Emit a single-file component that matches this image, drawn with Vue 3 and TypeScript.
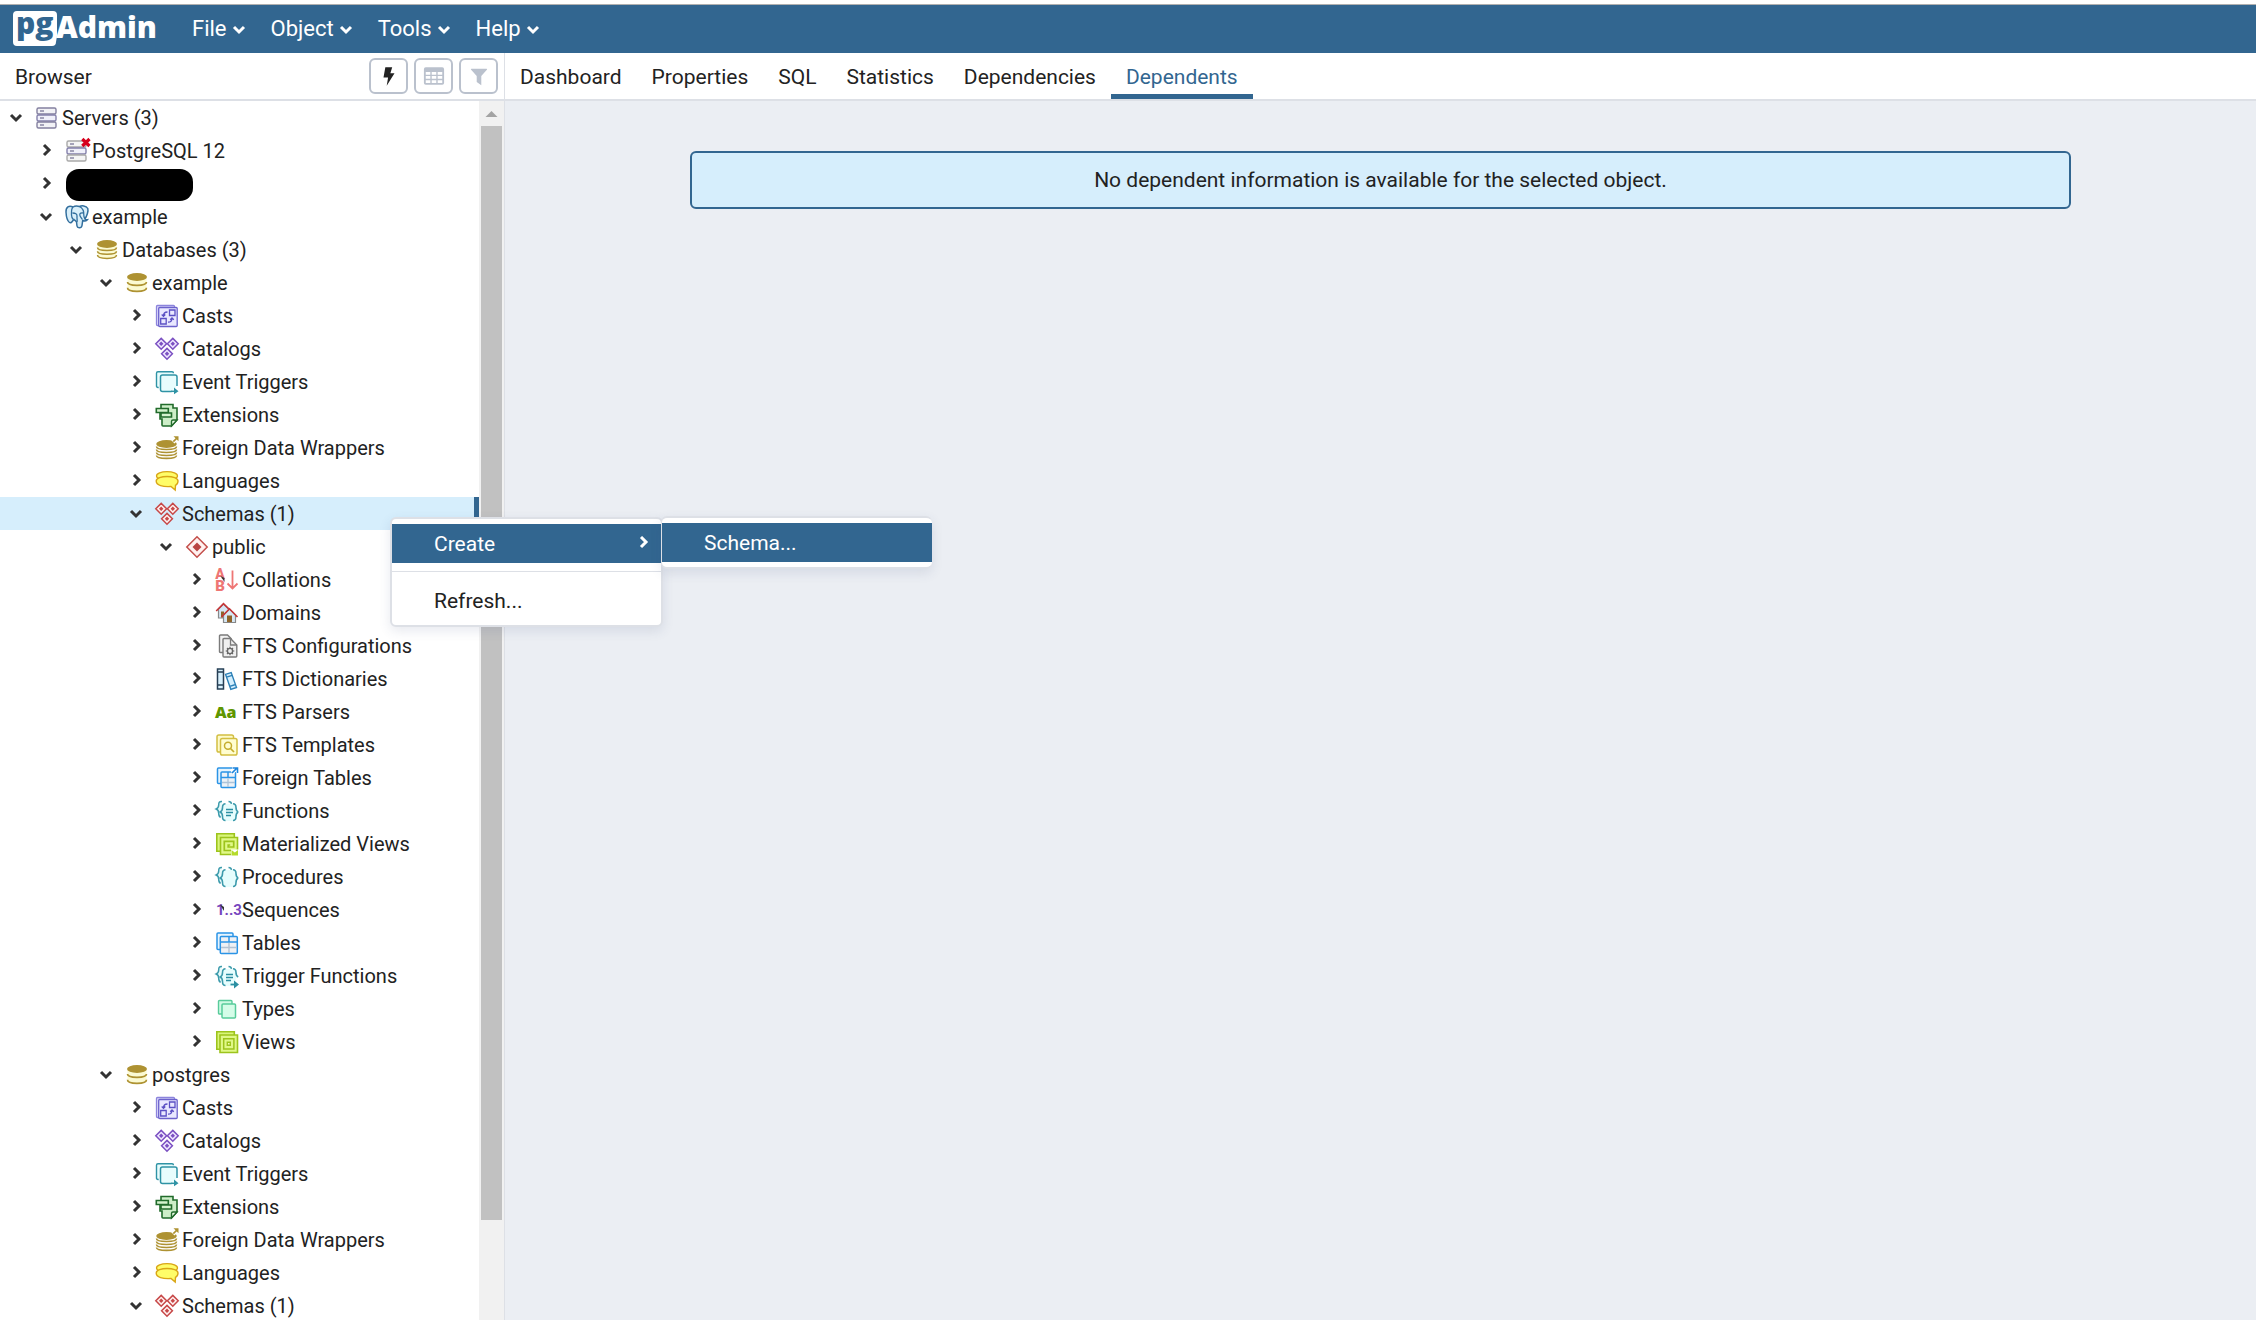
<script setup lang="ts">
import { ref } from 'vue'

type IconName = keyof typeof icons

interface TreeRow {
  level: number
  label: string
  icon: IconName
  open?: boolean
  selected?: boolean
  redacted?: boolean
}

const servers = (outer: string, outerFill: string) => `
  <rect x="2" y="2" width="19" height="6" rx="1.5" fill="${outerFill}" stroke="${outer}" stroke-width="1.4"/>
  <rect x="2" y="9" width="19" height="6" rx="1.5" fill="#f0f0fa" stroke="#8480ab" stroke-width="1.4"/>
  <rect x="2" y="16" width="19" height="6" rx="1.5" fill="${outerFill}" stroke="${outer}" stroke-width="1.4"/>
  <path d="M5 5h4M5 12h4M5 19h4" stroke="#8a88a5" stroke-width="1.4"/>`

const diamonds = (line: string, fill: string) =>
  [[6.2, 6.8], [17.8, 6.8], [12, 16.8]]
    .map(([x, y]) => `<g transform="translate(${x} ${y})">
      <path d="M0-5.400L5.400 0 0 5.400-5.400 0z" fill="${fill}" stroke="${line}" stroke-width="1.5"/>
      <path d="M0-2.200L2.200 0 0 2.200-2.200 0z" fill="${line}"/></g>`)
    .join('')

const braces = (inner: string) => `
  <path d="M7 2.5c-3 0-3.400 1-3.400 3.500 0 2.500-.2 3-2.400 4 2.200 1 2.400 2 2.400 4.500 0 2 .4 3 1.900 3.500z" fill="#e6fbfb"/>
  <path d="M9 5h10l3 7-3 10H9l-2-9z" fill="#e6fdfd"/>
  <path d="M7 2.500C4.200 2.300 3.700 3.300 3.700 6c0 2.200-.2 3-2.500 4 2.300 1 2.500 2 2.500 4.200 0 2.500.3 3.500 2 4M13.500 2.500c2.200 0 2.800.6 3 2.300" fill="none" stroke="#3c9bac" stroke-width="1.5"/>
  <path d="M10.500 4.700C8 4.700 7.500 6 7.500 8.500c0 2.500-.3 3.500-2.200 4.500 1.900 1 2.200 2 2.200 4.500 0 2.800.5 4 3 4" fill="none" stroke="#3c9bac" stroke-width="1.6"/>
  <path d="M18 4.700c2.500 0 3 1.300 3 3.800 0 2.500.3 3.500 2.200 4.500" fill="none" stroke="#3c9bac" stroke-width="1.6"/>
  ${inner}`

const braceTail = '<path d="M23.200 13c-1.900 1-2.200 2-2.200 4.500 0 2.800-.5 4-3 4" fill="none" stroke="#3c9bac" stroke-width="1.6"/>'
const braceLines = '<path d="M11 10.500h7M11 13.500h7M11 16.500h5" stroke="#2b8fa2" stroke-width="1.400"/>'

const icons = {
  servers: servers('#8480a0', '#f2f2f6'),
  serverBad: servers('#a9a9a9', '#f5f5f5') +
    '<path d="M17.300 0l7.200 7M24.500 0l-7.200 7" stroke="#d6001c" stroke-width="3.200"/>',
  none: '',
  elephant: `
    <path d="M8 2C4 0 .8 2 1 7c.2 4 1.500 9 3.500 10.500C6 18.500 7 17 8 15.500l1-1c1 1 2 1.500 2.500 2.500l.5 4c.3 2.500 4.500 2.500 5-.5l.7-5c2 .8 4 .4 4.800-.8-1.500.2-2.500-.2-2.500-1C22 11 23.500 6 22.800 3.500 21 .3 16.500.5 14.500 1.500 12 .6 9.500 1 8 2z" fill="#d9effa" stroke="#336f9e" stroke-width="1.500"/>
    <path d="M8 2C6 4 6.500 8 6.500 10c0 2 .5 3.500 2 4.800M14.500 1.500c3 1.500 4.500 5 4.300 8.500-.1 2 .7 3 1.200 3.800M12 17c.5-2-.2-3 0-6 .2-2-1.500-3-4.500-3M18.500 8c-2-.5-4 0-3.700 2 .3 2 1.500 2.500 2.500 4.500" fill="none" stroke="#336f9e" stroke-width="1.300"/>`,
  databases: `
    <path d="M2.500 7v10.500c0 4.500 19 4.500 19 0V7z" fill="#fbfad2"/>
    <path d="M2.500 9.500c0 4 19 4 19 0M2.500 13.300c0 4 19 4 19 0M2.500 17c0 4.500 19 4.500 19 0" fill="none" stroke="#ae9232" stroke-width="1.500"/>
    <ellipse cx="12" cy="6" rx="10" ry="3.900" fill="#ae9232"/>`,
  database: `
    <path d="M2.500 7v10c0 4.800 19 4.800 19 0V7z" fill="#fbfad2"/>
    <path d="M2.500 11c0 4.400 19 4.400 19 0M2.500 16.800c0 4.800 19 4.800 19 0" fill="none" stroke="#ae9232" stroke-width="1.700"/>
    <ellipse cx="12" cy="6" rx="10" ry="3.900" fill="#ae9232"/>`,
  casts: `
    <rect x="1.500" y="1.500" width="18" height="20" rx="1" fill="#dedcfb" stroke="#8c84dc" stroke-width="1.300"/>
    <rect x="3.700" y="3.500" width="18.500" height="19" rx="1" fill="#e9e8ff" stroke="#6c62cc" stroke-width="1.300"/>
    <path d="M14.500 6h5.500v5.500h-5.500zM5.700 14.500h5.500V20H5.700zM12.500 8c-3 0-4 1-4 4M6.700 10.500l1.800 1.800 1.800-1.800M13 18.200c3 0 4-1 4-4M15.200 15.700l1.800-1.800 1.800 1.800" fill="none" stroke="#5b50c4" stroke-width="1.300"/>`,
  catalogs: diamonds('#7b50c2', '#eee6ff'),
  schemas: diamonds('#c74848', '#fff0ef'),
  eventTriggers: `
    <path d="M3.700 17.500H3q-1.500 0-1.500-1.500V3.200q0-1.500 1.500-1.500h14q1.500 0 1.500 1.500" fill="#e8fdfd" stroke="#2f93a5" stroke-width="1.400"/>
    <path d="M16.500 21.500H7.500q-2 0-2-2V7q0-2 2-2H20q2 0 2 2v9" fill="#e8fdfd" stroke="#2f93a5" stroke-width="1.500"/>
    <path d="M16 21.300h4" stroke="#2f93a5" stroke-width="1.500"/><path d="M19 17.500l4.500 3.800-4.500 3z" fill="#2f93a5"/>`,
  extensions: `
    <path d="M6 5V1.500h12V5h4v12l-5.500 6H8q-1 0-1-1v-6H5v-6" fill="#cdeec8" stroke="#216b2b" stroke-width="1.600"/>
    <path d="M1.300 5.500h12v4h-12zM6 10h10.500v4H6z" fill="#d5f3cf" stroke="#216b2b" stroke-width="1.600"/>
    <path d="M22 17h-4q-1.500 0-1.500 1.500V23z" fill="#e9f9e5" stroke="#216b2b" stroke-width="1.400"/>`,
  fdw: `
    <path d="M1.500 10.500c0 4 20 4 20 0M1.500 13.500c0 4 20 4 20 0M1.500 16.500c0 4 20 4 20 0M1.500 19.500c0 3.800 20 3.800 20 0" fill="none" stroke="#ae9232" stroke-width="1.600"/>
    <ellipse cx="11.500" cy="8" rx="10.300" ry="3.900" fill="#ae9232"/>
    <path d="M18 6l3.500-3.500" stroke="#fff" stroke-width="4"/>
    <path d="M18.300 5.700L22 2" stroke="#ae9232" stroke-width="1.700"/><path d="M18.500.3h5v5z" fill="#ae9232"/>`,
  languages: `
    <ellipse cx="12" cy="7" rx="10.500" ry="4.300" fill="#fffd68" stroke="#d9a616" stroke-width="1.300"/>
    <path d="M1.200 12c0-6 21.800-6 21.800 0 0 2-1 3.500-2.500 4.300l-.3 4.700-4.200-3.500C8 18 1.200 16.500 1.200 12z" fill="#fffd68" stroke="#d9a616" stroke-width="1.400"/>`,
  schema: `
    <path d="M12 1.800l10.200 10.200L12 22.200 1.800 12z" fill="#fff1ef" stroke="#c44f4b" stroke-width="1.500"/>
    <path d="M12 7.500l4.500 4.500-4.500 4.500L7.500 12z" fill="#b94442"/>`,
  collations: `
    <text x="5" y="10.500" text-anchor="middle" font-family="Roboto, sans-serif" font-weight="900" font-size="14" fill="#ee7674">A</text>
    <text x="5" y="23" text-anchor="middle" font-family="Roboto, sans-serif" font-weight="900" font-size="15" fill="#ee7674">B</text>
    <path d="M17.500 2.500v18M12.500 15.500l5 5 5-5" fill="none" stroke="#ee7674" stroke-width="1.800"/>
    <path d="M5.500 8l4 2v4z" fill="#333"/>`,
  domains: `
    <path d="M3.500 8l5-5 5 5v9h-10z" fill="#d5e7f5" stroke="#888" stroke-width="1.200"/><path d="M6 10.500h3v6H6z" fill="#8f642a"/>
    <path d="M1.200 10L8.500 2.700 14 8" fill="none" stroke="#c63638" stroke-width="1.600"/>
    <path d="M8.500 14l6-6 6 6v7.500h-12z" fill="#d5e7f5" stroke="#888" stroke-width="1.200"/><path d="M12 14.500h5v6.500h-5z" fill="#8f642a"/>
    <path d="M6.500 16l8-8.200 8 8.200" fill="none" stroke="#c63638" stroke-width="1.600"/>`,
  ftsConfig: `
    <path d="M8 18.500H5.500q-1 0-1-1V2q0-1 1-1h7l4 4" fill="#f2f2f2" stroke="#7b7b7b" stroke-width="1.400"/>
    <path d="M9 4.500h6.500l6.300 6.500v11q0 1-1 1H9q-1 0-1-1V5.500q0-1 1-1z" fill="#efefef" stroke="#7b7b7b" stroke-width="1.400"/>
    <path d="M15.500 4.500V11h6.300" fill="none" stroke="#7b7b7b" stroke-width="1.300"/>
    <circle cx="15" cy="17" r="2.600" fill="none" stroke="#666" stroke-width="1.400"/>
    <path d="M15 12.700v1.500M15 19.800v1.500M10.700 17h1.500M17.800 17h1.500M12 14l1 1M17 19l1 1M18 14l-1 1M13 19l-1 1" stroke="#666" stroke-width="1.200"/>`,
  ftsDict: `
    <path d="M2.500 2h6v20h-6zM2.500 5h6M2.500 18h6" fill="#d9f1fd" stroke="#263f55" stroke-width="1.500"/>
    <path d="M10.500 7.300l5.700-1.800 5.300 15-5.700 1.800zM11.500 10.200l5.700-1.800M14.800 19.300l5.700-1.800" fill="#d5effd" stroke="#2c80b7" stroke-width="1.400"/>`,
  ftsParser: '<text x="0" y="18" font-family="Open Sans, sans-serif" font-weight="800" font-size="16" fill="#5f9600">Aa</text>',
  ftsTemplate: `
    <rect x="2" y="2" width="16.500" height="17" rx="1.800" fill="#fdfac9" stroke="#d2be42" stroke-width="1.500"/>
    <rect x="5.500" y="5.500" width="16.500" height="16.500" rx="1.800" fill="#fffdd0" stroke="#d2be42" stroke-width="1.500"/>
    <circle cx="13" cy="12.800" r="3.500" fill="none" stroke="#c5ad2e" stroke-width="1.500"/><path d="M15.500 15.500l3.500 3.500" stroke="#c5ad2e" stroke-width="1.700"/>`,
  foreignTable: `
    <path d="M6 17.500H3.500q-1 0-1-1V3q0-1 1-1H17" fill="#e6f4fe" stroke="#2b94e6" stroke-width="1.500"/>
    <rect x="6" y="6" width="14.500" height="15.500" rx="1" fill="#edf2f7" stroke="#2b94e6" stroke-width="1.500"/>
    <path d="M6 11.500h14.500M13 6v6" stroke="#2b94e6" stroke-width="1.500"/><path d="M7 16.500h13M13 12.500v8.500" stroke="#adc3d8" stroke-width="1.300"/>
    <path d="M17 7l5-5" stroke="#fff" stroke-width="3.500"/><path d="M17 7l5-5M17.500 2H22.500v5" fill="none" stroke="#1c84dc" stroke-width="1.600"/>`,
  functions: braces(braceTail + braceLines),
  procedures: braces(braceTail),
  triggerFunctions: braces(braceLines + '<path d="M15.500 20.500h4" stroke="#2b8fa2" stroke-width="1.800"/><path d="M19 16.500l5 4-5 4z" fill="#2b8fa2"/>'),
  matViews: `
    <path d="M1.800 1.800h17.500v17.500H1.800z" fill="#d9f57a" stroke="#9dc41c" stroke-width="1.600"/>
    <path d="M5.500 5.500h17v17h-17z" fill="#e0f888" stroke="#9dc41c" stroke-width="1.600"/>
    <path d="M16 18.500H9.300V9.300h9.400V15h-5.500v-2h2" fill="none" stroke="#9dc41c" stroke-width="1.700"/>
    <path d="M16 17.500h8V24h-8z" fill="#fff"/><path d="M16.500 23.500v-5.500l3.300 2.600 3.200-2.600v5.500z" fill="#b5db2b"/>`,
  views: `
    <path d="M1.800 1.800h17.500v17.500H1.800z" fill="#d9f57a" stroke="#9dc41c" stroke-width="1.600"/>
    <path d="M5 5h17.500v17.500H5z" fill="#e0f888" stroke="#9dc41c" stroke-width="1.600"/>
    <path d="M8.700 8.700h10.200v10.200H8.700z" fill="#e0f888" stroke="#9dc41c" stroke-width="1.500"/><path d="M12.300 12.300h3v3h-3z" fill="#f2ffb5" stroke="#9dc41c" stroke-width="1.400"/>`,
  sequences: '<text x="1" y="17" font-family="Roboto, sans-serif" font-weight="700" font-size="15" fill="#7645be">1..3</text><path d="M4.500 6l4.500 3v4z" fill="#333"/>',
  tables: `
    <path d="M5 18.500H3q-1 0-1-1V3q0-1 1-1h14q1 0 1 1v2" fill="#e6f4fe" stroke="#2b94e6" stroke-width="1.500"/>
    <rect x="5.300" y="5.500" width="17" height="17" rx="1" fill="#f0f1f4" stroke="#2b94e6" stroke-width="1.500"/>
    <path d="M5.300 11h17M14 5.500V11.500" stroke="#2b94e6" stroke-width="1.500"/><path d="M6 16.500h15.500M14 12v10" stroke="#b5c3d2" stroke-width="1.400"/>`,
  types: `
    <rect x="3.500" y="3.500" width="13.500" height="13.500" rx="1" fill="#cffae4" stroke="#58cb9b" stroke-width="1.400"/>
    <rect x="7" y="7" width="13.500" height="14" rx="1" fill="#d5fce8" stroke="#58cb9b" stroke-width="1.500"/>`,
}

const databaseChildren: TreeRow[] = [
  { level: 4, label: 'Casts', icon: 'casts' },
  { level: 4, label: 'Catalogs', icon: 'catalogs' },
  { level: 4, label: 'Event Triggers', icon: 'eventTriggers' },
  { level: 4, label: 'Extensions', icon: 'extensions' },
  { level: 4, label: 'Foreign Data Wrappers', icon: 'fdw' },
  { level: 4, label: 'Languages', icon: 'languages' },
]

const rows: TreeRow[] = [
  { level: 0, label: 'Servers (3)', icon: 'servers', open: true },
  { level: 1, label: 'PostgreSQL 12', icon: 'serverBad' },
  { level: 1, label: '', icon: 'none', redacted: true },
  { level: 1, label: 'example', icon: 'elephant', open: true },
  { level: 2, label: 'Databases (3)', icon: 'databases', open: true },
  { level: 3, label: 'example', icon: 'database', open: true },
  ...databaseChildren,
  { level: 4, label: 'Schemas (1)', icon: 'schemas', open: true, selected: true },
  { level: 5, label: 'public', icon: 'schema', open: true },
  { level: 6, label: 'Collations', icon: 'collations' },
  { level: 6, label: 'Domains', icon: 'domains' },
  { level: 6, label: 'FTS Configurations', icon: 'ftsConfig' },
  { level: 6, label: 'FTS Dictionaries', icon: 'ftsDict' },
  { level: 6, label: 'FTS Parsers', icon: 'ftsParser' },
  { level: 6, label: 'FTS Templates', icon: 'ftsTemplate' },
  { level: 6, label: 'Foreign Tables', icon: 'foreignTable' },
  { level: 6, label: 'Functions', icon: 'functions' },
  { level: 6, label: 'Materialized Views', icon: 'matViews' },
  { level: 6, label: 'Procedures', icon: 'procedures' },
  { level: 6, label: 'Sequences', icon: 'sequences' },
  { level: 6, label: 'Tables', icon: 'tables' },
  { level: 6, label: 'Trigger Functions', icon: 'triggerFunctions' },
  { level: 6, label: 'Types', icon: 'types' },
  { level: 6, label: 'Views', icon: 'views' },
  { level: 3, label: 'postgres', icon: 'database', open: true },
  ...databaseChildren,
  { level: 4, label: 'Schemas (1)', icon: 'schemas', open: true },
]

const menus = ['File', 'Object', 'Tools', 'Help']
const tabs = ['Dashboard', 'Properties', 'SQL', 'Statistics', 'Dependencies', 'Dependents']
const activeTab = ref('Dependents')
</script>

<template>
  <div class="app">
    <header class="navbar">
      <svg class="logo" viewBox="0 0 146 40" role="img" aria-label="pgAdmin">
        <path d="M5 2h36q4 0 4 4v21l-1 6q0 4-4 4H5q-4 0-4-4V6q0-4 4-4z" fill="#fff" />
        <text class="logo-pg" x="4" y="25">pg</text>
        <text class="logo-admin" x="44" y="29">Admin</text>
      </svg>
      <nav class="menus">
        <button v-for="m in menus" :key="m" type="button" class="menu">
          {{ m }}
          <svg class="menu-caret" viewBox="0 0 14 10" aria-hidden="true"><path d="M2 2l5 5 5-5" /></svg>
        </button>
      </nav>
    </header>

    <div class="body">
      <aside class="sidebar">
        <div class="panel-head">
          <span class="panel-title">Browser</span>
          <div class="tools">
            <button type="button" class="tool" aria-label="Query Tool">
              <svg viewBox="0 0 24 24"><path d="M8 2.500h7.500L13.500 9H18L9.500 22.500l1.500-9H6z" fill="#222" /></svg>
            </button>
            <button type="button" class="tool" aria-label="View Data" disabled>
              <svg viewBox="0 0 24 24"><path fill-rule="evenodd" d="M3 2.500h18q2 0 2 2v15q0 2-2 2H3q-2 0-2-2v-15q0-2 2-2zM3 7.500v3h5v-3zM9.500 7.500v3h5v-3zM16 7.500v3h5v-3zM3 12v3h5v-3zM9.500 12v3h5v-3zM16 12v3h5v-3zM3 16.500v3h5v-3zM9.500 16.500v3h5v-3zM16 16.500v3h5v-3z" fill="#bac1cd" /></svg>
            </button>
            <button type="button" class="tool" aria-label="Filtered Rows" disabled>
              <svg viewBox="0 0 24 24"><path d="M4 4h16q1.500 0 .6 1.200L14.500 12v10L9.500 18.500V12L3.400 5.200Q2.500 4 4 4z" fill="#bac1cd" /></svg>
            </button>
          </div>
        </div>
        <div class="tree-wrap">
          <ul class="tree" role="tree">
            <li
              v-for="(row, i) in rows"
              :key="i"
              class="row"
              :class="{ selected: row.selected }"
              :style="{ paddingLeft: 8 + row.level * 30 + 'px' }"
              role="treeitem"
              :aria-expanded="!!row.open"
            >
              <button type="button" class="toggle" aria-label="Toggle">
                <svg viewBox="0 0 16 16">
                  <path :d="row.open ? 'M3 5l5 5 5-5' : 'M6 2l5 5-5 5'" />
                </svg>
              </button>
              <span v-if="row.redacted" class="redacted"></span>
              <template v-else>
                <svg class="icon" viewBox="0 0 24 24" aria-hidden="true" v-html="icons[row.icon]"></svg>
                <span class="label">{{ row.label }}</span>
              </template>
            </li>
          </ul>
          <div class="scrollbar">
            <svg class="scroll-up" viewBox="0 0 24 25" aria-hidden="true"><path d="M6 16l6-6 6 6z" fill="#a3a3a3" /></svg>
            <div class="thumb"></div>
          </div>
        </div>
      </aside>

      <main class="main">
        <nav class="tabs" role="tablist">
          <button
            v-for="t in tabs"
            :key="t"
            type="button"
            role="tab"
            class="tab"
            :class="{ active: t === activeTab }"
            :aria-selected="t === activeTab"
            @click="activeTab = t"
          >{{ t }}</button>
        </nav>
        <section class="content">
          <div class="alert" role="status">No dependent information is available for the selected object.</div>
        </section>
      </main>
    </div>

    <div class="context context-main" role="menu">
      <button type="button" class="item hover" role="menuitem">
        Create
        <svg class="item-caret" viewBox="0 0 10 16" aria-hidden="true"><path d="M2 1l5 5-5 5" /></svg>
      </button>
      <hr class="divider" />
      <button type="button" class="item" role="menuitem">Refresh...</button>
    </div>
    <div class="context context-sub" role="menu">
      <button type="button" class="item hover" role="menuitem">Schema...</button>
    </div>
  </div>
</template>

<style>
body {
  margin: 0;
}
</style>

<style scoped>
.app {
  position: relative;
  display: flex;
  flex-direction: column;
  height: 100vh;
  overflow: hidden;
  box-sizing: border-box;
  padding-top: 4px;
  background: #fff;
  color: #222;
  font-family: Roboto, 'Liberation Sans', sans-serif;
  font-size: 21px;
}
button {
  font: inherit;
  color: inherit;
  background: none;
  border: 0;
  padding: 0;
}
.navbar {
  display: flex;
  align-items: center;
  flex: none;
  height: 48px;
  border-top: 1px solid #b0b0b0;
  background: #326690;
  color: #fff;
}
.logo {
  width: 146px;
  height: 40px;
  margin-left: 12px;
  overflow: visible;
}
.logo-pg {
  font: 800 30px 'Open Sans', sans-serif;
  fill: #326690;
  stroke: #fff;
  stroke-width: 3px;
  paint-order: stroke;
}
.logo-admin {
  font: 800 30px 'Open Sans', sans-serif;
  fill: #fff;
}
.menus {
  display: flex;
  gap: 25px;
  margin-left: 34px;
  padding-bottom: 2px;
  font-size: 22px;
}
.menu {
  display: flex;
  align-items: center;
  gap: 5px;
}
.menu-caret {
  width: 14px;
  height: 10px;
  margin-top: 3px;
}
.menu-caret path,
.item-caret path {
  fill: none;
  stroke: #fff;
  stroke-width: 3;
}
.body {
  display: flex;
  flex: 1;
  min-height: 0;
}
.sidebar {
  display: flex;
  flex-direction: column;
  flex: none;
  width: 504px;
  border-right: 1px solid #dde0e6;
}
.panel-head {
  display: flex;
  align-items: center;
  justify-content: space-between;
  flex: none;
  height: 46px;
  padding: 0 6px 0 15px;
  border-bottom: 2px solid #dde0e6;
}
.panel-title {
  padding-top: 2px;
}
.tools {
  display: flex;
  gap: 6px;
}
.tool {
  display: flex;
  align-items: center;
  justify-content: center;
  box-sizing: border-box;
  width: 39px;
  height: 36px;
  border: 2px solid #bac1cd;
  border-radius: 6px;
}
.tool svg {
  width: 22px;
  height: 22px;
}
.tree-wrap {
  display: flex;
  flex: 1;
  min-height: 0;
}
.tree {
  flex: 1;
  margin: 0;
  padding: 0;
  list-style: none;
  overflow: hidden;
}
.row {
  display: flex;
  align-items: center;
  box-sizing: border-box;
  height: 33px;
  font-size: 20px;
  line-height: 33px;
  white-space: nowrap;
}
.row.selected {
  background: #d6eefc;
  border-right: 5px solid #326690;
}
.label {
  padding-top: 2px;
}
.toggle {
  flex: none;
  width: 16px;
  height: 16px;
  margin-right: 11px;
}
.toggle svg {
  display: block;
  width: 16px;
  height: 16px;
}
.toggle path {
  fill: none;
  stroke: #333;
  stroke-width: 3;
}
.icon {
  flex: none;
  width: 24px;
  height: 24px;
  margin-right: 3px;
  overflow: visible;
}
.redacted {
  width: 127px;
  height: 32px;
  margin: 2px 0 0 4px;
  margin-left: 1px;
  border-radius: 13px;
  background: #000;
}
.scrollbar {
  display: flex;
  flex-direction: column;
  flex: none;
  width: 25px;
  background: #f1f1f1;
}
.scroll-up {
  flex: none;
  width: 25px;
  height: 25px;
}
.thumb {
  height: 91%;
  max-height: 1094px;
  margin: 0 2px;
  background: #c1c1c1;
}
.main {
  display: flex;
  flex-direction: column;
  flex: 1;
  min-width: 0;
}
.tabs {
  display: flex;
  flex: none;
  height: 46px;
  border-bottom: 2px solid #dde0e6;
}
.tab {
  box-sizing: border-box;
  padding: 6px 15px 0;
  border-bottom: 5px solid transparent;
}
.tab.active {
  color: #326690;
  border-bottom-color: #326690;
}
.content {
  flex: 1;
  padding: 50px 185px 0;
  background: #ebeef3;
}
.alert {
  padding: 14px;
  border: 2px solid #326690;
  border-radius: 6px;
  background: #d6eefc;
  line-height: 26px;
  text-align: center;
}
.context {
  position: absolute;
  box-sizing: border-box;
  width: 273px;
  padding: 5px 0;
  border: 2px solid #dde0e6;
  border-radius: 6px;
  background: #fff;
  box-shadow: 0 4px 12px rgba(60, 70, 120, 0.12);
}
.context-main {
  left: 390px;
  top: 517px;
}
.context-sub {
  left: 661px;
  top: 516px;
  width: 271px;
  border-left-width: 1px;
  border-right-width: 0;
}
.item {
  display: flex;
  align-items: center;
  justify-content: space-between;
  box-sizing: border-box;
  width: 100%;
  height: 39px;
  padding: 0 12px 0 42px;
}
.item.hover {
  background: #326690;
  color: #fff;
}
.item-caret {
  width: 10px;
  height: 16px;
}
.divider {
  height: 1px;
  margin: 8px 0 9px;
  border: 0;
  background: #dde0e6;
}
</style>
